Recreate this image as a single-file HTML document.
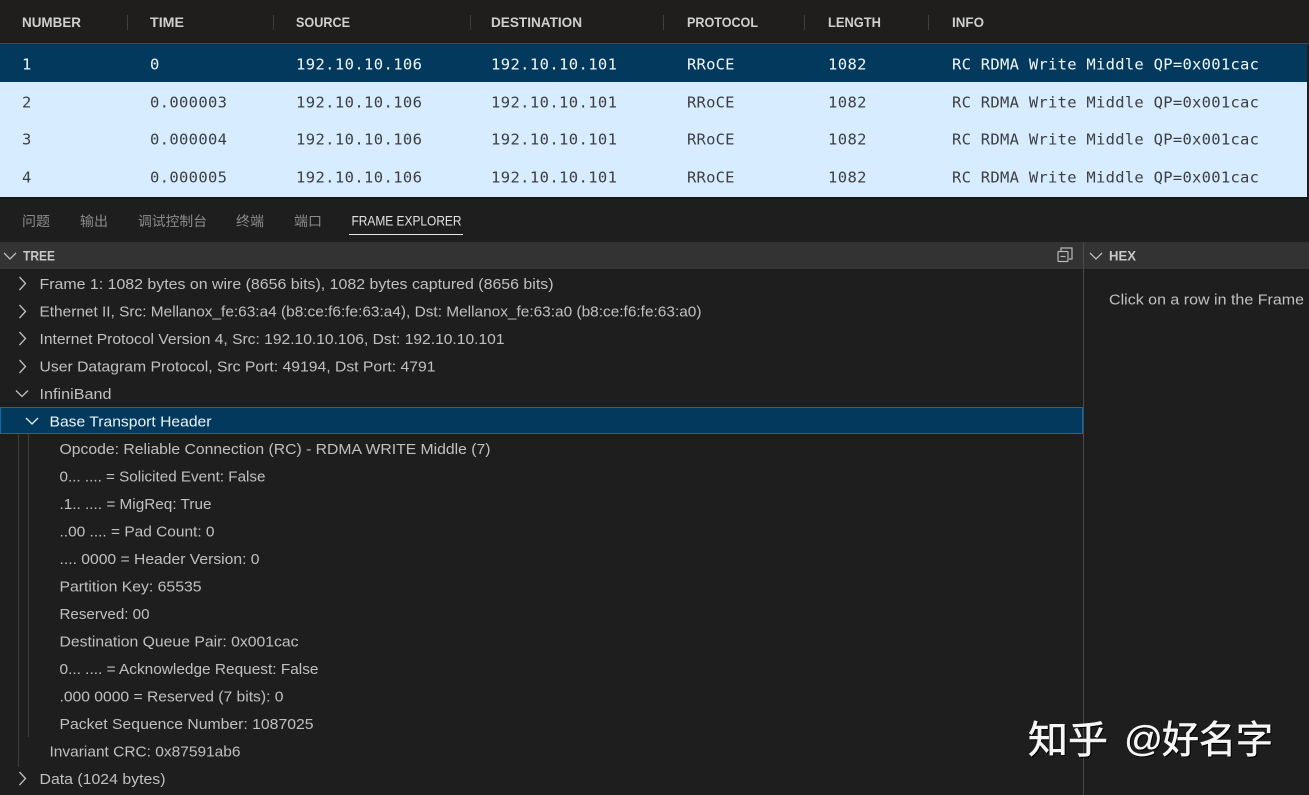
<!DOCTYPE html>
<html><head><meta charset="utf-8"><style>
html,body{margin:0;padding:0;background:#1e1e1e;width:1309px;height:795px;overflow:hidden}
svg{display:block}
.h{font:bold 14px "Liberation Sans",sans-serif;fill:#cfcfcf}
.m{font:15.500px "DejaVu Sans Mono",monospace}
.d{fill:#3a3f44}
.t{font:15px "Liberation Sans",sans-serif;fill:#c0c0c0}
.s{font:bold 14px "Liberation Sans",sans-serif;fill:#c8c8c8}
.c{font:13.500px "Liberation Sans","Noto Sans CJK SC",sans-serif;fill:#8c8c8c}
.ch{fill:none;stroke:#c0c0c0;stroke-width:1.3}
.w{font:38px "Noto Sans CJK SC",sans-serif;fill:#f6f6f6;stroke:#f6f6f6;stroke-width:.6;filter:drop-shadow(1px 1px 0 #000)}
</style></head><body>
<svg width="1309" height="795" viewBox="0 0 1309 795" xmlns="http://www.w3.org/2000/svg">
<rect width="1309" height="795" fill="#1e1e1e"/>
<rect width="1309" height="43" fill="#1f1e1d"/>
<rect y="43" width="1309" height="1" fill="#45494d"/>
<g class="d"><rect x="127" y="15" width="1" height="15"/><rect x="273" y="15" width="1" height="15"/><rect x="470" y="15" width="1" height="15"/><rect x="663" y="15" width="1" height="15"/><rect x="804" y="15" width="1" height="15"/><rect x="928" y="15" width="1" height="15"/></g>
<g class="h">
<text x="22" y="27" textLength="59" lengthAdjust="spacingAndGlyphs">NUMBER</text>
<text x="150" y="27" textLength="34" lengthAdjust="spacingAndGlyphs">TIME</text>
<text x="296" y="27" textLength="54" lengthAdjust="spacingAndGlyphs">SOURCE</text>
<text x="491" y="27" textLength="91" lengthAdjust="spacingAndGlyphs">DESTINATION</text>
<text x="687" y="27" textLength="71" lengthAdjust="spacingAndGlyphs">PROTOCOL</text>
<text x="828" y="27" textLength="53" lengthAdjust="spacingAndGlyphs">LENGTH</text>
<text x="952" y="27" textLength="32" lengthAdjust="spacingAndGlyphs">INFO</text>
</g>
<rect y="44" width="1307" height="38" fill="#04395e"/>
<rect y="82" width="1307" height="115" fill="#d8ecff"/>
<rect y="197" width="1309" height="2" fill="#14181a"/>
<g class="m" fill="#f0f8fd">
<text x="22" y="69.500">1</text>
<text x="150" y="69.500">0</text>
<text x="296" y="69.500" textLength="126">192.10.10.106</text>
<text x="491" y="69.500" textLength="126">192.10.10.101</text>
<text x="687" y="69.500" textLength="47.500">RRoCE</text>
<text x="828" y="69.500" textLength="38.500">1082</text>
<text x="952" y="69.500" textLength="307">RC RDMA Write Middle QP=0x001cac</text>
</g>
<g class="m" fill="#3b3f43">
<text x="22" y="107.500">2</text>
<text x="150" y="107.500" textLength="77">0.000003</text>
<text x="296" y="107.500" textLength="126">192.10.10.106</text>
<text x="491" y="107.500" textLength="126">192.10.10.101</text>
<text x="687" y="107.500" textLength="47.500">RRoCE</text>
<text x="828" y="107.500" textLength="38.500">1082</text>
<text x="952" y="107.500" textLength="307">RC RDMA Write Middle QP=0x001cac</text>
<text x="22" y="144.500">3</text>
<text x="150" y="144.500" textLength="77">0.000004</text>
<text x="296" y="144.500" textLength="126">192.10.10.106</text>
<text x="491" y="144.500" textLength="126">192.10.10.101</text>
<text x="687" y="144.500" textLength="47.500">RRoCE</text>
<text x="828" y="144.500" textLength="38.500">1082</text>
<text x="952" y="144.500" textLength="307">RC RDMA Write Middle QP=0x001cac</text>
<text x="22" y="182.500">4</text>
<text x="150" y="182.500" textLength="77">0.000005</text>
<text x="296" y="182.500" textLength="126">192.10.10.106</text>
<text x="491" y="182.500" textLength="126">192.10.10.101</text>
<text x="687" y="182.500" textLength="47.500">RRoCE</text>
<text x="828" y="182.500" textLength="38.500">1082</text>
<text x="952" y="182.500" textLength="307">RC RDMA Write Middle QP=0x001cac</text>
</g>
<g class="c">
<text x="22" y="226" textLength="28" lengthAdjust="spacingAndGlyphs">问题</text>
<text x="80" y="226" textLength="28" lengthAdjust="spacingAndGlyphs">输出</text>
<text x="138" y="226" textLength="69" lengthAdjust="spacingAndGlyphs">调试控制台</text>
<text x="236" y="226" textLength="28" lengthAdjust="spacingAndGlyphs">终端</text>
<text x="294" y="226" textLength="28" lengthAdjust="spacingAndGlyphs">端口</text>
<text x="351.500" y="225.500" textLength="110" lengthAdjust="spacingAndGlyphs" style="fill:#e4e4e4;font-size:14px">FRAME EXPLORER</text>
</g>
<rect x="349" y="234" width="114" height="1" fill="#e7e7e7"/>
<rect y="242" width="1309" height="27" fill="#333333"/>
<path class="ch" d="M4 253l6 6 6-6"/>
<text class="s" x="23" y="260.500" textLength="32" lengthAdjust="spacingAndGlyphs">TREE</text>
<g fill="none" stroke="#b8b8b8" stroke-width="1.200"><path d="M1061 251.500v-3.500h11v11h-3"/><rect x="1058" y="251.500" width="10" height="10" rx="1"/><path d="M1060.500 256.500h5"/></g>
<path class="ch" d="M1090 253l6 6 6-6"/>
<text class="s" x="1109" y="260.500" textLength="27" lengthAdjust="spacingAndGlyphs">HEX</text>
<rect x="1083" y="242" width="1" height="553" fill="#4a4a4a"/>
<text class="t" x="1109" y="304.500" textLength="195" lengthAdjust="spacingAndGlyphs">Click on a row in the Frame</text>
<rect y="407" width="1083" height="27" fill="#04395e"/>
<rect x=".5" y="407.500" width="1082" height="26" fill="none" stroke="#0f6ea8"/>
<rect x="18" y="434" width="1" height="333" fill="#3d3d3d"/>
<rect x="28" y="434" width="1" height="303" fill="#3d3d3d"/>
<g class="ch">
<path d="M19.500 277l6 6.500-6 6.500"/><path d="M19.500 305l6 6.500-6 6.500"/><path d="M19.500 332l6 6.500-6 6.500"/><path d="M19.500 360l6 6.500-6 6.500"/>
<path d="M16 390.500l6 6 6-6"/>
<path d="M26 418l6 6 6-6" style="stroke:#e8f4fb"/>
<path d="M19.500 772l6 6.500-6 6.500"/>
</g>
<g class="t">
<text x="39.500" y="289" textLength="514" lengthAdjust="spacingAndGlyphs">Frame 1: 1082 bytes on wire (8656 bits), 1082 bytes captured (8656 bits)</text>
<text x="39.500" y="316.500" textLength="662" lengthAdjust="spacingAndGlyphs">Ethernet II, Src: Mellanox_fe:63:a4 (b8:ce:f6:fe:63:a4), Dst: Mellanox_fe:63:a0 (b8:ce:f6:fe:63:a0)</text>
<text x="39.500" y="344" textLength="465" lengthAdjust="spacingAndGlyphs">Internet Protocol Version 4, Src: 192.10.10.106, Dst: 192.10.10.101</text>
<text x="39.500" y="371.500" textLength="396" lengthAdjust="spacingAndGlyphs">User Datagram Protocol, Src Port: 49194, Dst Port: 4791</text>
<text x="39.500" y="399" textLength="72" lengthAdjust="spacingAndGlyphs">InfiniBand</text>
<text x="49.500" y="426.500" textLength="162" lengthAdjust="spacingAndGlyphs" style="fill:#e8f4fb">Base Transport Header</text>
<text x="59.500" y="454" textLength="431" lengthAdjust="spacingAndGlyphs">Opcode: Reliable Connection (RC) - RDMA WRITE Middle (7)</text>
<text x="59.500" y="481.500" textLength="206" lengthAdjust="spacingAndGlyphs">0... .... = Solicited Event: False</text>
<text x="59.500" y="509" textLength="152" lengthAdjust="spacingAndGlyphs">.1.. .... = MigReq: True</text>
<text x="59.500" y="536.500" textLength="155" lengthAdjust="spacingAndGlyphs">..00 .... = Pad Count: 0</text>
<text x="59.500" y="564" textLength="200" lengthAdjust="spacingAndGlyphs">.... 0000 = Header Version: 0</text>
<text x="59.500" y="591.500" textLength="142" lengthAdjust="spacingAndGlyphs">Partition Key: 65535</text>
<text x="59.500" y="619" textLength="90" lengthAdjust="spacingAndGlyphs">Reserved: 00</text>
<text x="59.500" y="646.500" textLength="239" lengthAdjust="spacingAndGlyphs">Destination Queue Pair: 0x001cac</text>
<text x="59.500" y="674" textLength="259" lengthAdjust="spacingAndGlyphs">0... .... = Acknowledge Request: False</text>
<text x="59.500" y="701.500" textLength="224" lengthAdjust="spacingAndGlyphs">.000 0000 = Reserved (7 bits): 0</text>
<text x="59.500" y="729" textLength="254" lengthAdjust="spacingAndGlyphs">Packet Sequence Number: 1087025</text>
<text x="49.500" y="756.500" textLength="191" lengthAdjust="spacingAndGlyphs">Invariant CRC: 0x87591ab6</text>
<text x="39.500" y="784" textLength="126" lengthAdjust="spacingAndGlyphs">Data (1024 bytes)</text>
</g>
<g class="w">
<text x="1028" y="753" textLength="80" lengthAdjust="spacingAndGlyphs">知乎</text>
<text x="1124" y="751" style="font-size:36px;font-family:'Liberation Sans',sans-serif;stroke-width:.2" textLength="39" lengthAdjust="spacingAndGlyphs">@</text>
<text x="1162" y="753" textLength="111" lengthAdjust="spacingAndGlyphs">好名字</text>
</g>
</svg>
</body></html>
